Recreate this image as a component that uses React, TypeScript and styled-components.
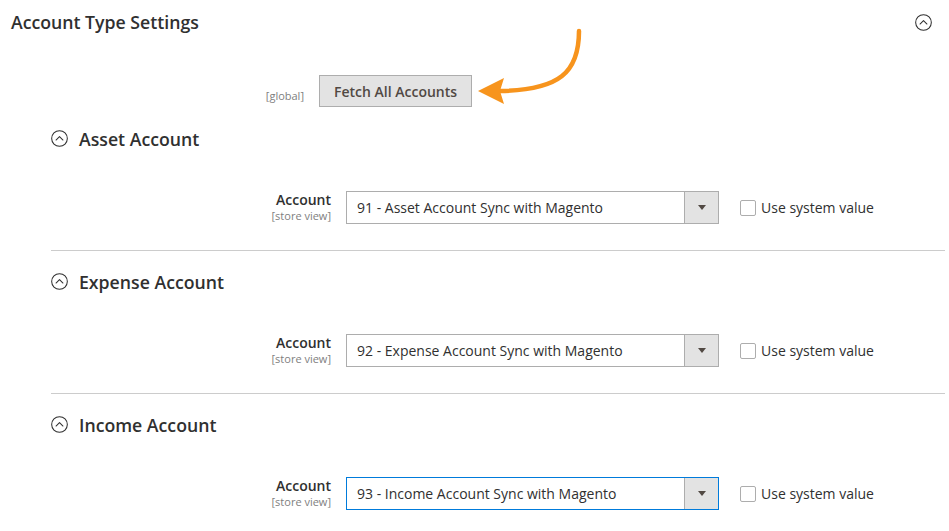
import React from 'react';
import styled, { createGlobalStyle } from 'styled-components';

const GlobalStyle = createGlobalStyle`
  html, body {
    margin: 0;
    padding: 0;
    background: #ffffff;
  }
  body {
    font-family: "Open Sans", "Liberation Sans", sans-serif;
    color: #303030;
  }
`;

const Page = styled.div`
  position: relative;
  width: 949px;
  height: 531px;
  overflow: hidden;
`;

const TopBar = styled.div`
  display: flex;
  align-items: center;
  justify-content: space-between;
  height: 44px;
  padding: 0 17px 0 11px;
`;

const Title = styled.h2`
  margin: 0;
  font-size: 17.7px;
  font-weight: 600;
  color: #303030;
`;

const Body = styled.div`
  margin: 0 4px 0 51px;
`;

const FetchRow = styled.div`
  display: flex;
  align-items: center;
  gap: 15px;
  margin-top: 31px;
  margin-bottom: 1px;
`;

const ScopeCell = styled.div<{ $width: number }>`
  width: ${p => p.$width}px;
  text-align: right;
  font-size: 11px;
  color: #808080;
  padding-top: 8px;
`;

const FetchButton = styled.button`
  height: 32px;
  padding: 0 14px;
  background: #e3e3e3;
  border: 1px solid #adadad;
  border-radius: 0;
  font-family: inherit;
  font-size: 14px;
  font-weight: 600;
  color: #514943;
  cursor: pointer;
`;

const Section = styled.section<{ $last?: boolean }>`
  padding: 15px 0 26px;
  border-bottom: ${p => (p.$last ? 'none' : '1px solid #cccccc')};
`;

const SectionHead = styled.div`
  display: flex;
  align-items: center;
  gap: 11px;
  height: 31px;
`;

const SectionTitle = styled.h3`
  margin: 0;
  font-size: 17.7px;
  font-weight: 600;
  color: #303030;
`;

const FieldRow = styled.div`
  display: flex;
  align-items: flex-start;
  gap: 15px;
  margin-top: 37px;
`;

const LabelCell = styled.div`
  width: 280px;
  text-align: right;
  display: flex;
  flex-direction: column;
  gap: 1px;
`;

const LabelText = styled.span`
  font-size: 14px;
  font-weight: 600;
  line-height: 17px;
  color: #303030;
`;

const LabelScope = styled.span`
  font-size: 11px;
  line-height: 13px;
  color: #808080;
`;

const SelectBox = styled.div<{ $focused?: boolean }>`
  display: flex;
  width: 373px;
  height: 33px;
  box-sizing: border-box;
  border: 1px solid ${p => (p.$focused ? '#007bdb' : '#adadad')};
  background: #ffffff;
`;

const SelectValue = styled.div`
  flex: 1;
  display: flex;
  align-items: center;
  padding-left: 10px;
  font-size: 14px;
  color: #303030;
  white-space: nowrap;
`;

const SelectToggle = styled.div`
  width: 33px;
  display: flex;
  align-items: center;
  justify-content: center;
  background: #e3e3e3;
  border-left: 1px solid #adadad;
`;

const Caret = styled.span`
  width: 0;
  height: 0;
  border-left: 4px solid transparent;
  border-right: 4px solid transparent;
  border-top: 5px solid #514943;
`;

const SystemValue = styled.label`
  display: flex;
  align-items: center;
  gap: 5px;
  height: 33px;
  margin-left: 6px;
  font-size: 14px;
  color: #303030;
`;

const CheckBox = styled.span`
  width: 16px;
  height: 16px;
  box-sizing: border-box;
  border: 1px solid #adadad;
  border-radius: 2px;
  background: #ffffff;
`;

const Annotation = styled.svg`
  position: absolute;
  left: 0;
  top: 0;
  pointer-events: none;
`;

const CollapseIcon = ({ size = 17 }: { size?: number }) => (
  <svg width={size} height={size} viewBox="0 0 18 18" fill="none">
    <circle cx="9" cy="9" r="8.3" stroke="#303030" strokeWidth="1.1" />
    <path d="M5.3 10.6 L9 7 L12.7 10.6" stroke="#303030" strokeWidth="1.1" strokeLinecap="round" strokeLinejoin="round" />
  </svg>
);

const accounts = [
  { title: 'Asset Account', value: '91 - Asset Account Sync with Magento' },
  { title: 'Expense Account', value: '92 - Expense Account Sync with Magento' },
  { title: 'Income Account', value: '93 - Income Account Sync with Magento', focused: true },
];

export default function App() {
  return (
    <Page>
      <GlobalStyle />
      <TopBar>
        <Title>Account Type Settings</Title>
        <CollapseIcon />
      </TopBar>
      <Body>
        <FetchRow>
          <ScopeCell $width={253}>[global]</ScopeCell>
          <FetchButton>Fetch All Accounts</FetchButton>
        </FetchRow>
        {accounts.map((a, i) => (
          <Section key={a.title} $last={i === accounts.length - 1}>
            <SectionHead>
              <CollapseIcon />
              <SectionTitle>{a.title}</SectionTitle>
            </SectionHead>
            <FieldRow>
              <LabelCell>
                <LabelText>Account</LabelText>
                <LabelScope>[store view]</LabelScope>
              </LabelCell>
              <SelectBox $focused={a.focused}>
                <SelectValue>{a.value}</SelectValue>
                <SelectToggle>
                  <Caret />
                </SelectToggle>
              </SelectBox>
              <SystemValue>
                <CheckBox />
                Use system value
              </SystemValue>
            </FieldRow>
          </Section>
        ))}
      </Body>
      <Annotation width="949" height="531" viewBox="0 0 949 531">
        <path d="M579 31 C579 72 560 90 500 91" stroke="#f7941d" strokeWidth="4.5" fill="none" strokeLinecap="round" />
        <path d="M478 91 L504 78 L500 91 L504 104 Z" fill="#f7941d" />
      </Annotation>
    </Page>
  );
}
